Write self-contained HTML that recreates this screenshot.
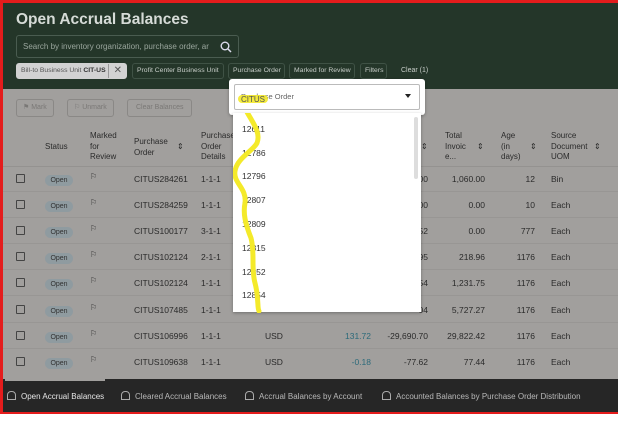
<!DOCTYPE html>
<html><head><meta charset="utf-8"><style>
*{margin:0;padding:0;box-sizing:border-box}
body{width:618px;height:423px;background:#fff;font-family:"Liberation Sans",sans-serif;position:relative;overflow:hidden}
div{white-space:nowrap}
.a{position:absolute}
#hdr{left:0;top:0;width:618px;height:89px;background:#243629}
#gray{left:0;top:89px;width:618px;height:290px;background:#a19f9d}
#bot{left:0;top:379px;width:618px;height:33px;background:#262626}
.chip{position:absolute;top:63px;height:16px;border:1px solid #3f5245;border-radius:3px;color:#c7cdc8;font-size:6.8px;line-height:14px;padding:0 4px}
.btn{position:absolute;top:99px;height:18px;border:1px solid #8a8886;border-radius:3px;color:#7a7876;font-size:7px;line-height:16px;padding:0 6px}
.th{position:absolute;font-size:8px;color:#2a2a2a;line-height:10.5px}
.td{position:absolute;font-size:8.5px;color:#2a2a2a;line-height:10px}
.cb{position:absolute;left:16px;width:9px;height:9px;border:1px solid #444;border-radius:1px}
.pill{position:absolute;left:45px;width:28px;height:11px;border-radius:6px;background:#8f9ba0;font-size:7px;color:#333;text-align:center;line-height:11px}
.fl{position:absolute;left:90px;font-size:8px;color:#333}
.r{text-align:right}
.li{position:absolute;left:242px;font-size:8.5px;color:#333}
.tab{position:absolute;top:391px;font-size:8px;color:#b8b8b8}
.tab i{display:inline-block;width:9px;height:9px;border:1px solid #aaa;border-radius:4px 4px 0 0;margin-right:5px;vertical-align:-1px}
</style></head><body>
<div class="a" id="hdr"></div>
<div class="a" style="left:16px;top:11px;font-size:15.5px;font-weight:bold;color:#d6dbd7">Open Accrual Balances</div>
<div class="a" style="left:16px;top:35px;width:223px;height:23px;border:1px solid #4a5c50;border-radius:3px;font-size:8px;color:#9aa69d;line-height:21px;padding-left:6px">Search by inventory organization, purchase order, ar
<svg style="position:absolute;right:6px;top:5px" width="12" height="12" viewBox="0 0 12 12"><circle cx="5" cy="5" r="3.8" fill="none" stroke="#dde" stroke-width="1.4"/><path d="M8 8l3 3" stroke="#dde" stroke-width="1.5"/></svg></div>
<div class="chip" style="left:16px;width:111px;background:#d2d2d2;border-color:#d2d2d2;color:#555">Bill-to Business Unit <b style="color:#333">CIT-US</b><span style="position:absolute;left:91px;top:0;width:1px;height:14px;background:#999"></span><span style="position:absolute;right:4px;top:0;font-size:10px;color:#555">✕</span></div>
<div class="chip" style="left:132px;width:92px">Profit Center Business Unit</div>
<div class="chip" style="left:228px;width:57px">Purchase Order</div>
<div class="chip" style="left:289px;width:66px">Marked for Review</div>
<div class="chip" style="left:360px;width:27px">Filters</div>
<div class="a" style="left:401px;top:67px;font-size:7px;color:#c7cdc8">Clear (1)</div>

<div class="a" id="gray"></div>
<div class="btn" style="left:16px">⚑ Mark</div>
<div class="btn" style="left:67px">⚐ Unmark</div>
<div class="btn" style="left:127px;padding:0 8px">Clear Balances</div>

<div class="th" style="left:45px;top:142px">Status</div>
<div class="th" style="left:90px;top:131px">Marked<br>for<br>Review</div>
<div class="th" style="left:134px;top:137px">Purchase<br>Order</div><div class="th" style="left:177px;top:142px">⇕</div>
<div class="th" style="left:201px;top:131px">Purchase<br>Order<br>Details</div>
<div class="th" style="left:421px;top:142px">⇕</div>
<div class="th" style="left:445px;top:131px">Total<br>Invoic<br>e...</div><div class="th" style="left:477px;top:142px">⇕</div>
<div class="th" style="left:501px;top:131px">Age<br>(in<br>days)</div><div class="th" style="left:530px;top:142px">⇕</div>
<div class="th" style="left:551px;top:131px">Source<br>Document<br>UOM</div><div class="th" style="left:594px;top:142px">⇕</div>

<div class="a" style="left:0;top:166px;width:618px;height:1px;background:#949290"></div>
<div class="a" style="left:0;top:191px;width:618px;height:1px;background:#989694"></div>
<div class="a" style="left:0;top:217px;width:618px;height:1px;background:#989694"></div>
<div class="a" style="left:0;top:243px;width:618px;height:1px;background:#989694"></div>
<div class="a" style="left:0;top:269px;width:618px;height:1px;background:#989694"></div>
<div class="a" style="left:0;top:295px;width:618px;height:1px;background:#989694"></div>
<div class="a" style="left:0;top:322px;width:618px;height:1px;background:#989694"></div>
<div class="a" style="left:0;top:348px;width:618px;height:1px;background:#989694"></div>

<div style="position:absolute;left:0;top:174px">
<div class="cb" style="top:0"></div><div class="pill" style="top:1px">Open</div><div class="fl" style="top:-2px">⚐</div>
<div class="td" style="left:134px">CITUS284261</div><div class="td" style="left:201px">1-1-1</div>
<div class="td r" style="left:380px;width:48px">.00</div><div class="td r" style="left:435px;width:50px">1,060.00</div><div class="td r" style="left:500px;width:35px">12</div><div class="td" style="left:551px">Bin</div></div>
<div style="position:absolute;left:0;top:200px">
<div class="cb" style="top:0"></div><div class="pill" style="top:1px">Open</div><div class="fl" style="top:-2px">⚐</div>
<div class="td" style="left:134px">CITUS284259</div><div class="td" style="left:201px">1-1-1</div>
<div class="td r" style="left:380px;width:48px">.00</div><div class="td r" style="left:435px;width:50px">0.00</div><div class="td r" style="left:500px;width:35px">10</div><div class="td" style="left:551px">Each</div></div>
<div style="position:absolute;left:0;top:226px">
<div class="cb" style="top:0"></div><div class="pill" style="top:1px">Open</div><div class="fl" style="top:-2px">⚐</div>
<div class="td" style="left:134px">CITUS100177</div><div class="td" style="left:201px">3-1-1</div>
<div class="td r" style="left:380px;width:48px">52</div><div class="td r" style="left:435px;width:50px">0.00</div><div class="td r" style="left:500px;width:35px">777</div><div class="td" style="left:551px">Each</div></div>
<div style="position:absolute;left:0;top:252px">
<div class="cb" style="top:0"></div><div class="pill" style="top:1px">Open</div><div class="fl" style="top:-2px">⚐</div>
<div class="td" style="left:134px">CITUS102124</div><div class="td" style="left:201px">2-1-1</div>
<div class="td r" style="left:380px;width:48px">95</div><div class="td r" style="left:435px;width:50px">218.96</div><div class="td r" style="left:500px;width:35px">1176</div><div class="td" style="left:551px">Each</div></div>
<div style="position:absolute;left:0;top:278px">
<div class="cb" style="top:0"></div><div class="pill" style="top:1px">Open</div><div class="fl" style="top:-2px">⚐</div>
<div class="td" style="left:134px">CITUS102124</div><div class="td" style="left:201px">1-1-1</div>
<div class="td r" style="left:380px;width:48px">54</div><div class="td r" style="left:435px;width:50px">1,231.75</div><div class="td r" style="left:500px;width:35px">1176</div><div class="td" style="left:551px">Each</div></div>
<div style="position:absolute;left:0;top:305px">
<div class="cb" style="top:0"></div><div class="pill" style="top:1px">Open</div><div class="fl" style="top:-2px">⚐</div>
<div class="td" style="left:134px">CITUS107485</div><div class="td" style="left:201px">1-1-1</div>
<div class="td r" style="left:380px;width:48px">04</div><div class="td r" style="left:435px;width:50px">5,727.27</div><div class="td r" style="left:500px;width:35px">1176</div><div class="td" style="left:551px">Each</div></div>
<div style="position:absolute;left:0;top:331px">
<div class="cb" style="top:0"></div><div class="pill" style="top:1px">Open</div><div class="fl" style="top:-2px">⚐</div>
<div class="td" style="left:134px">CITUS106996</div><div class="td" style="left:201px">1-1-1</div><div class="td" style="left:265px">USD</div>
<div class="td r" style="left:320px;width:51px;color:#2c6a7a">131.72</div><div class="td r" style="left:378px;width:50px">-29,690.70</div><div class="td r" style="left:435px;width:50px">29,822.42</div><div class="td r" style="left:500px;width:35px">1176</div><div class="td" style="left:551px">Each</div></div>
<div style="position:absolute;left:0;top:357px">
<div class="cb" style="top:0"></div><div class="pill" style="top:1px">Open</div><div class="fl" style="top:-2px">⚐</div>
<div class="td" style="left:134px">CITUS109638</div><div class="td" style="left:201px">1-1-1</div><div class="td" style="left:265px">USD</div>
<div class="td r" style="left:320px;width:51px;color:#2c6a7a">-0.18</div><div class="td r" style="left:378px;width:50px">-77.62</div><div class="td r" style="left:435px;width:50px">77.44</div><div class="td r" style="left:500px;width:35px">1176</div><div class="td" style="left:551px">Each</div></div>

<!-- dropdown -->
<div class="a" style="left:229px;top:79px;width:196px;height:36px;background:#fff;border-radius:3px;box-shadow:0 1px 3px rgba(0,0,0,.3)"></div>
<div class="a" style="left:234px;top:84px;width:186px;height:26px;border:1px solid #bbb;border-radius:2px;background:#fff">
<div class="a" style="left:6px;top:7px;font-size:7.5px;color:#666">Purchase Order</div>
<div class="a" style="left:3px;top:10px;width:30px;height:8px;background:#f4ea2a;border-radius:4px;opacity:.9"></div>
<div class="a" style="left:6px;top:10px;font-size:8px;color:#555">CITUS</div>
<div class="a" style="right:8px;top:9px;width:0;height:0;border-left:3px solid transparent;border-right:3px solid transparent;border-top:4px solid #222"></div></div>
<div class="a" style="left:233px;top:113px;width:188px;height:199px;background:#fff;box-shadow:0 1px 3px rgba(0,0,0,.3)"></div>
<div class="a" style="left:414px;top:117px;width:4px;height:62px;background:#ddd;border-radius:2px"></div>
<div class="li" style="top:124px">12611</div>
<div class="li" style="top:148px">12786</div>
<div class="li" style="top:171px">12796</div>
<div class="li" style="top:195px">12807</div>
<div class="li" style="top:219px">12809</div>
<div class="li" style="top:243px">12815</div>
<div class="li" style="top:267px">12852</div>
<div class="li" style="top:290px">12854</div>
<svg class="a" style="left:233px;top:113px" width="40" height="200" viewBox="0 0 40 200"><path d="M14 -1 C20 10 28 20 24 30 C20 38 4 45 2 58 C0 70 14 75 12 90 C10 100 12 110 18 125 C22 140 18 155 22 170 C26 185 24 195 26 198" fill="none" stroke="#f4ea2a" stroke-width="5" stroke-linecap="round"/></svg>

<div class="a" id="bot"></div>
<div class="tab" style="left:7px;color:#e6e6e6"><i></i>Open Accrual Balances</div>
<div class="tab" style="left:121px"><i></i>Cleared Accrual Balances</div>
<div class="tab" style="left:245px"><i></i>Accrual Balances by Account</div>
<div class="tab" style="left:382px"><i></i>Accounted Balances by Purchase Order Distribution</div>
<div class="a" style="left:5px;top:379px;width:100px;height:2px;background:#a19f9d"></div>

<!-- red frame -->
<div class="a" style="left:0;top:0;width:618px;height:3px;background:#e41c1c"></div>
<div class="a" style="left:0;top:0;width:3px;height:414px;background:#e41c1c"></div>
<div class="a" style="left:0;top:412px;width:618px;height:2px;background:#e41c1c"></div>
</body></html>
